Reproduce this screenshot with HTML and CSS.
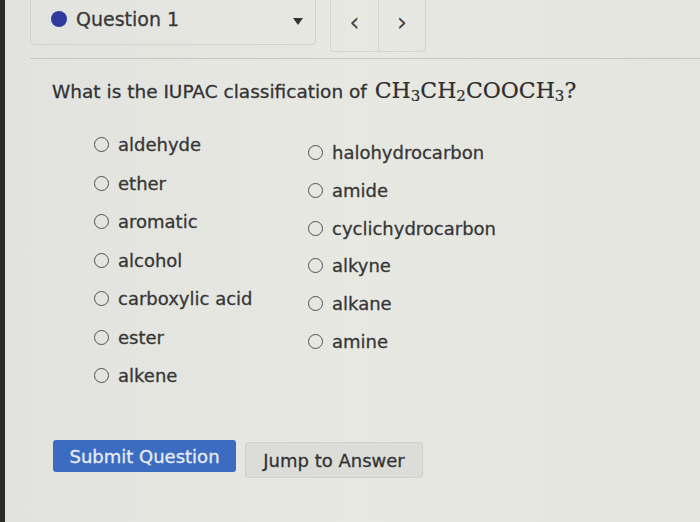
FILE: index.html
```html
<!DOCTYPE html>
<html>
<head>
<meta charset="utf-8">
<link rel="stylesheet" href="styles.css">
</head>
<body>
<div class="screen">
  <div class="topbar">
    <div class="qbox">
      <span class="dot"></span>
      <span class="qtitle">Question 1</span>
      <span class="caret"></span>
    </div>
    <div class="nav">
      <div class="navbtn">&lsaquo;</div>
      <div class="navbtn">&rsaquo;</div>
    </div>
  </div>
  <div class="rule"></div>
  <div class="question">What is the IUPAC classification of <span class="formula">CH<sub>3</sub>CH<sub>2</sub>COOCH<sub>3</sub>?</span></div>
  <div class="options">
    <div class="col">
      <div class="opt"><span class="radio"></span>aldehyde</div>
      <div class="opt"><span class="radio"></span>ether</div>
      <div class="opt"><span class="radio"></span>aromatic</div>
      <div class="opt"><span class="radio"></span>alcohol</div>
      <div class="opt"><span class="radio"></span>carboxylic acid</div>
      <div class="opt"><span class="radio"></span>ester</div>
      <div class="opt"><span class="radio"></span>alkene</div>
    </div>
    <div class="col col2">
      <div class="opt"><span class="radio"></span>halohydrocarbon</div>
      <div class="opt"><span class="radio"></span>amide</div>
      <div class="opt"><span class="radio"></span>cyclichydrocarbon</div>
      <div class="opt"><span class="radio"></span>alkyne</div>
      <div class="opt"><span class="radio"></span>alkane</div>
      <div class="opt"><span class="radio"></span>amine</div>
    </div>
  </div>
  <div class="buttons">
    <div class="btn primary">Submit Question</div>
    <div class="btn secondary">Jump to Answer</div>
  </div>
</div>
</body>
</html>
```
FILE: styles.css
```css
html, body {
  margin: 0;
  padding: 0;
}
body {
  width: 700px;
  height: 522px;
  overflow: hidden;
  background: #e5e5e0;
  font-family: "DejaVu Sans", Verdana, sans-serif;
  color: #333;
  -webkit-text-stroke: 0.3px;
}
.screen {
  height: 522px;
  border-left: 5px solid #2a2a2a;
  box-sizing: border-box;
  background: linear-gradient(90deg, #e2e3de 0%, #e8e8e3 50%, #e5e5df 100%);
}
.topbar {
  display: flex;
  align-items: flex-start;
  padding-left: 25px;
  gap: 14px;
}
.qbox {
  width: 286px;
  height: 45px;
  box-sizing: border-box;
  border: 1px solid #d2d3cf;
  border-top: none;
  border-radius: 0 0 4px 4px;
  display: flex;
  align-items: center;
  padding: 0 0 6px 20px;
}
.dot {
  width: 16px;
  height: 16px;
  border-radius: 50%;
  background: #2f3a9c;
  margin-right: 9px;
}
.qtitle {
  font-size: 19px;
  color: #383838;
  flex: 1;
}
.caret {
  width: 0;
  height: 0;
  border-left: 5px solid transparent;
  border-right: 5px solid transparent;
  border-top: 7px solid #333;
  margin-right: 12px;
  margin-top: 4px;
}
.nav {
  display: flex;
  height: 51px;
  border: 1px solid #d2d3cf;
  border-top: none;
  border-radius: 0 0 4px 4px;
}
.navbtn {
  width: 47px;
  display: flex;
  align-items: center;
  justify-content: center;
  font-size: 26px;
  color: #444;
  padding-bottom: 8px;
  box-sizing: border-box;
  -webkit-text-stroke: 0;
}
.navbtn + .navbtn {
  border-left: 1px solid #d2d3cf;
}
.rule {
  height: 1px;
  background: #c6c7c2;
  margin: 6px 0 0 25px;
}
.question {
  margin: 19px 0 0 47px;
  font-size: 18.5px;
  line-height: 26px;
  color: #333;
}
.formula {
  font-family: "DejaVu Serif", "Liberation Serif", serif;
  font-size: 22px;
  color: #2e2e2e;
  -webkit-text-stroke: 0.2px;
  margin-left: 2px;
}
.formula sub {
  font-size: 15px;
  vertical-align: -3px;
  line-height: 0;
}
.options {
  display: flex;
  margin: 29px 0 0 89px;
}
.col {
  display: flex;
  flex-direction: column;
  gap: 17.5px;
  width: 214px;
}
.col2 {
  margin-top: 8px;
  gap: 16.8px;
}
.opt {
  display: flex;
  align-items: center;
  font-size: 18px;
  line-height: 21px;
  color: #363636;
}
.radio {
  width: 15px;
  height: 15px;
  border: 1.5px solid #505050;
  border-radius: 50%;
  margin-right: 9px;
  box-sizing: border-box;
}
.buttons {
  display: flex;
  align-items: flex-start;
  gap: 9px;
  margin: 54px 0 0 48px;
}
.btn {
  font-size: 18px;
  border-radius: 3px;
  box-sizing: border-box;
  display: flex;
  align-items: center;
  justify-content: center;
}
.primary {
  width: 183px;
  height: 32px;
  background: #3c6cc2;
  color: #e8ecf4;
}
.secondary {
  width: 178px;
  height: 36px;
  margin-top: 2px;
  background: #dcdcd8;
  border: 1px solid #cfd0cc;
  color: #333;
}
```
